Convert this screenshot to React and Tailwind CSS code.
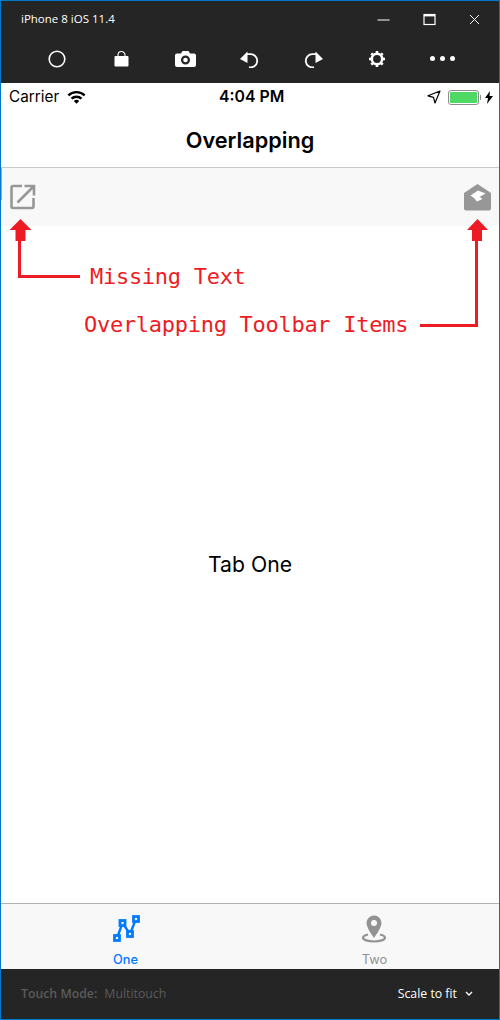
function TitleBar() {
  return (
    <div className="h-[36px] flex items-center justify-between pl-[20px] pr-[19px] text-white">
      <span className="text-[11.5px] font-['Open_Sans',sans-serif]">iPhone 8 iOS 11.4</span>
      <div className="flex items-center gap-[33px]">
        <svg width="13" height="13" viewBox="0 0 13 13"><path d="M0.5 7h12" stroke="#fff" strokeWidth="1" /></svg>
        <svg width="13" height="13" viewBox="0 0 13 13"><rect x="1" y="1.5" width="11" height="10" fill="none" stroke="#fff" strokeWidth="1.2" /><rect x="1" y="1" width="11" height="2.4" fill="#fff" /></svg>
        <svg width="11" height="11" viewBox="0 0 11 11"><path d="M1 1l9 9M10 1l-9 9" stroke="#fff" strokeWidth="1" /></svg>
      </div>
    </div>
  )
}

function ToolIcons() {
  return (
    <div className="h-[46px] flex items-center pl-[24px] pb-[3px]">
      <div className="w-[64px] flex justify-center">
        <svg width="18" height="18" viewBox="0 0 18 18"><circle cx="9" cy="9" r="7.800" fill="none" stroke="#fff" strokeWidth="1.600" /></svg>
      </div>
      <div className="w-[64px] flex justify-center">
        <svg width="15" height="17" viewBox="0 0 15 17"><path d="M4 7V5a3.500 3.500 0 0 1 7 0v2" fill="none" stroke="#fff" strokeWidth="1.100" /><rect x="0.500" y="6" width="14" height="10.500" rx="1" fill="#fff" /></svg>
      </div>
      <div className="w-[64px] flex justify-center">
        <svg width="21" height="16" viewBox="0 0 21 16"><path fillRule="evenodd" d="M2 2.500h4L7.500 0h6L15 2.500h4a2 2 0 0 1 2 2V14a2 2 0 0 1-2 2H2a2 2 0 0 1-2-2V4.500a2 2 0 0 1 2-2zM10.500 4.500a4.500 4.500 0 1 0 0 9 4.500 4.500 0 0 0 0-9z" fill="#fff" /><circle cx="10.500" cy="9" r="2.300" fill="#fff" /></svg>
      </div>
      <div className="w-[64px] flex justify-center">
        <svg width="19" height="18" viewBox="0 0 19 18"><path d="M7 4.200h3.500a6.600 6.600 0 1 1-1.500 13" fill="none" stroke="#fff" strokeWidth="1.800" /><path d="M0 9L7.500 1.500V13z" fill="#fff" /></svg>
      </div>
      <div className="w-[64px] flex justify-center">
        <svg width="19" height="18" viewBox="0 0 19 18"><path d="M12 4.200H8.500a6.600 6.600 0 1 0 1.500 13" fill="none" stroke="#fff" strokeWidth="1.800" /><path d="M19 9L11.500 1.500V13z" fill="#fff" /></svg>
      </div>
      <div className="w-[64px] flex justify-center">
        <svg width="18" height="18" viewBox="0 0 18 18">
          <path d="M9 1v3M9 14v3M1 9h3M14 9h3M3.300 3.300l2.200 2.200M12.500 12.500l2.200 2.200M14.700 3.300l-2.200 2.200M5.500 12.500l-2.200 2.200" stroke="#fff" strokeWidth="2.600" />
          <circle cx="9" cy="9" r="5.200" fill="none" stroke="#fff" strokeWidth="2.600" />
        </svg>
      </div>
      <div className="w-[64px] flex justify-center gap-[5px] pl-[2px]">
        <span className="w-[5px] h-[5px] rounded-full bg-white" />
        <span className="w-[5px] h-[5px] rounded-full bg-white" />
        <span className="w-[5px] h-[5px] rounded-full bg-white" />
      </div>
    </div>
  )
}

function StatusBar() {
  return (
    <div className="h-[28px] flex items-center justify-between pl-[8px] pr-[6px] text-black font-['Inter',sans-serif] relative">
      <div className="flex items-center gap-[8px]">
        <span className="text-[15.300px]">Carrier</span>
        <svg width="19" height="14" viewBox="0 0 19 14">
          <path d="M0.500 4.500a13 13 0 0 1 18 0l-1.700 1.800a10.500 10.500 0 0 0-14.600 0z" fill="#000" />
          <path d="M3.700 7.800a8.500 8.500 0 0 1 11.600 0l-1.700 1.800a6 6 0 0 0-8.200 0z" fill="#000" />
          <path d="M6.800 11a4 4 0 0 1 5.400 0l-2.700 2.800z" fill="#000" />
        </svg>
      </div>
      <span className="absolute left-[218px] text-[15.800px] font-semibold">4:04 PM</span>
      <div className="flex items-center">
        <svg width="14" height="14" viewBox="0 0 14 14"><path d="M13 1L1 5.800l5.500 1.500L8 13z" fill="none" stroke="#000" strokeWidth="1.200" strokeLinejoin="round" /></svg>
        <div className="ml-[7px] w-[31px] h-[15px] border border-[#8e8e8e] rounded-[3px] p-[1px]">
          <div className="w-full h-full bg-[#4cd964] rounded-[1px]" />
        </div>
        <div className="w-[1px] h-[5px] bg-[#8e8e8e] ml-[1px]" />
        <svg className="ml-[4px]" width="8" height="13" viewBox="0 0 8 13"><path d="M5 0L0 7h3l-1 6 6-8H4.500z" fill="#000" /></svg>
      </div>
    </div>
  )
}

function Annotations() {
  return (
    <>
      <svg className="absolute left-0 top-0 pointer-events-none" width="500" height="340" viewBox="0 0 500 340">
        <path d="M1.500 168V200" stroke="#a8a8a8" strokeWidth="1" />
        <path d="M20.500 219L31.500 230H25.500V241H15.500V230H9.500z" fill="#ed1c24" />
        <path d="M19.500 238V276.500H80" fill="none" stroke="#ed1c24" strokeWidth="3" />
        <path d="M477.500 219L488 230H482V241H472V230H467z" fill="#ed1c24" />
        <path d="M476.500 238V325.500H420" fill="none" stroke="#ed1c24" strokeWidth="3" />
      </svg>
      <span className="absolute left-[90px] top-[263px] text-[22px] leading-[28px] text-[#ed1c24] font-['DejaVu_Sans_Mono',monospace] tracking-[-0.280px]">Missing Text</span>
      <span className="absolute left-[84px] top-[311px] text-[22px] leading-[28px] text-[#ed1c24] font-['DejaVu_Sans_Mono',monospace] tracking-[-0.280px]">Overlapping Toolbar Items</span>
    </>
  )
}

export default function App() {
  return (
    <div className="relative w-[500px] h-[1020px] bg-[#007acc] p-[1px] overflow-hidden">
      <div className="h-full flex flex-col bg-white">
        <div className="bg-[#252525]">
          <TitleBar />
          <ToolIcons />
        </div>
        <StatusBar />
        <div className="h-[57px] flex items-center justify-center border-b border-[#c8c8c8] pt-[2px] font-['Inter',sans-serif]">
          <span className="text-[21.700px] font-semibold text-black">Overlapping</span>
        </div>
        <div className="h-[58px] bg-[#f8f8f8] flex items-center justify-between pl-[9px] pr-[8px]">
          <svg width="26" height="26" viewBox="0 0 26 26" fill="none" stroke="#979797" strokeWidth="2.600">
            <path d="M12 2H3a1.500 1.500 0 0 0-1.500 1.500v19A1.500 1.500 0 0 0 3 24h19a1.500 1.500 0 0 0 1.500-1.500V14" />
            <path d="M7.500 18.500L23 3M14.500 2H24v9.500" />
          </svg>
          <svg width="27" height="27" viewBox="0 0 27 27">
            <path d="M13.500 0L27 9v15.500a2 2 0 0 1-2 2H2a2 2 0 0 1-2-2V9z" fill="#979797" />
            <path d="M6.500 11.500L14 6.500l7.500 3-6 3.500 3 2-5.500 2.500-3-3.500z" fill="#fff" />
          </svg>
        </div>
        <div className="flex-1 flex items-center justify-center font-['Inter',sans-serif] text-[21.200px] text-black">
          Tab One
        </div>
        <div className="h-[66px] border-t border-[#b2b2b2] bg-[#f8f8f8] flex font-['Inter',sans-serif] text-[12.800px]">
          <div className="w-[249px] flex flex-col items-center text-[#007aff] font-medium pt-[11px]">
            <svg width="28" height="28" viewBox="0 0 28 28" fill="none" stroke="#007aff">
              <path d="M5 23L10.500 8l7.500 11L24 4" strokeWidth="2.400" />
              <g fill="#f8f8f8" strokeWidth="2.800">
                <rect x="2.500" y="20.500" width="5" height="5" />
                <rect x="8" y="5.500" width="5" height="5" />
                <rect x="15.500" y="16.500" width="5" height="5" />
                <rect x="21.500" y="1.500" width="5" height="5" />
              </g>
            </svg>
            <span className="mt-[9px] leading-[16px]">One</span>
          </div>
          <div className="flex-1 flex flex-col items-center text-[#929292] pt-[11px]">
            <svg className="-ml-[2px]" width="28" height="28" viewBox="0 0 28 28">
              <path fillRule="evenodd" d="M14 0.500a7.500 7.500 0 0 1 7.500 7.500C21.500 13 14 23 14 23S6.500 13 6.500 8A7.500 7.500 0 0 1 14 0.500zm0 4.500a3 3 0 1 0 0 6 3 3 0 0 0 0-6z" fill="#929292" />
              <path d="M8 19.500c-3 .8-5 1.900-5 3.300 0 2 4.900 3.700 11 3.700s11-1.700 11-3.700c0-1.400-2-2.500-5-3.300" fill="none" stroke="#929292" strokeWidth="2.200" />
            </svg>
            <span className="mt-[9px] leading-[16px]">Two</span>
          </div>
        </div>
        <div className="h-[50px] bg-[#252525] flex items-center justify-between pl-[20px] pr-[26px] font-['Open_Sans',sans-serif] text-[12.300px]">
          <div className="flex gap-[7px] text-[#5b5b5b]">
            <span className="font-semibold">Touch Mode:</span>
            <span>Multitouch</span>
          </div>
          <div className="flex items-center gap-[8px] text-white">
            <span>Scale to fit</span>
            <svg width="8" height="6" viewBox="0 0 8 6"><path d="M1 1l3 3 3-3" fill="none" stroke="#fff" strokeWidth="1.300" /></svg>
          </div>
        </div>
      </div>
      <Annotations />
    </div>
  )
}
